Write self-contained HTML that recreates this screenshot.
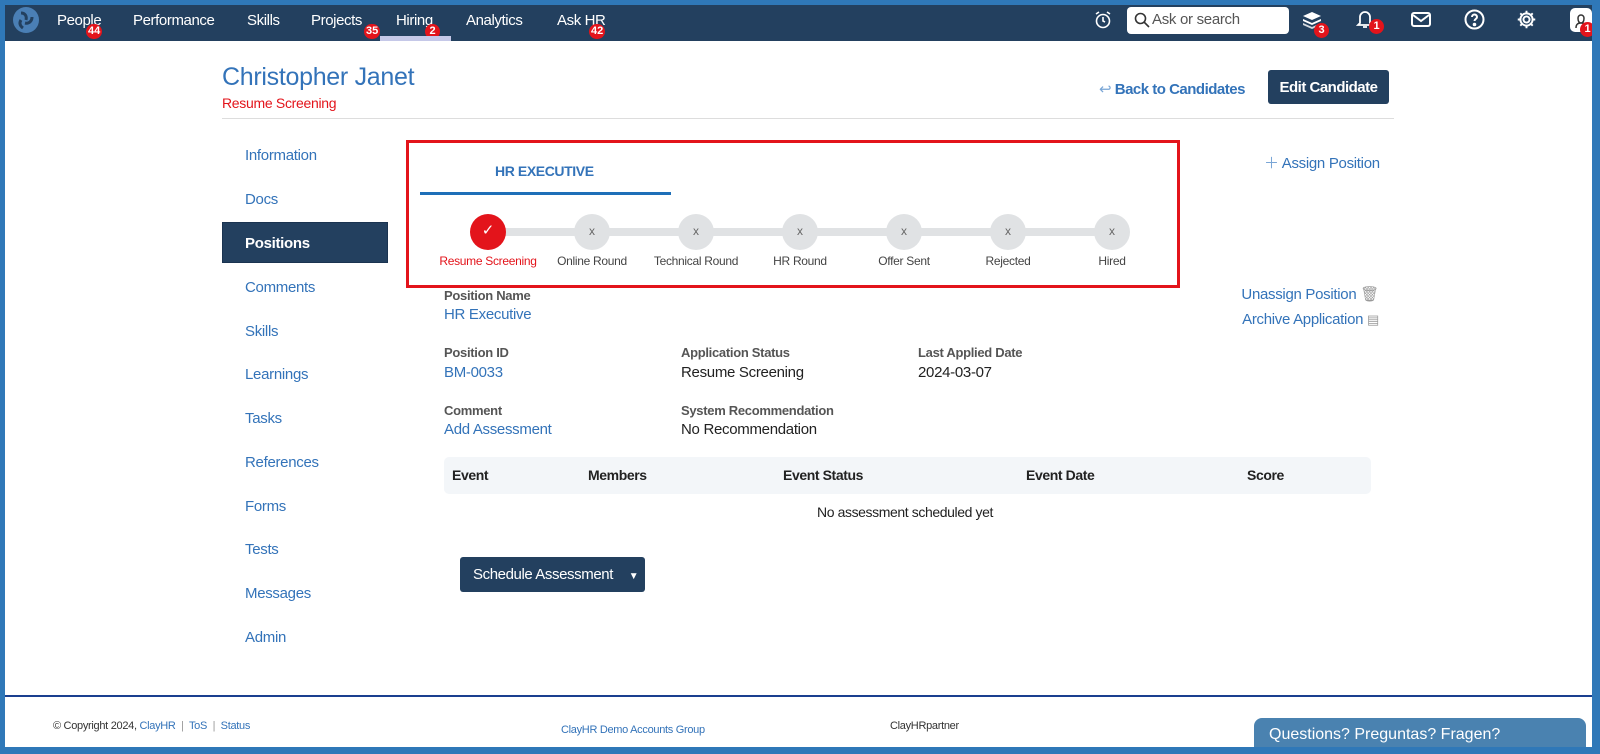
<!DOCTYPE html>
<html><head><meta charset="utf-8"><style>
*{box-sizing:border-box;margin:0;padding:0}
body{width:1600px;height:754px;overflow:hidden;background:#fff;font-family:"Liberation Sans",sans-serif;position:relative;color:#222}
.a{position:absolute;white-space:nowrap}
.frame{position:absolute;inset:0;border:5px solid #2f78b8;border-right-width:8px;border-bottom-width:7px;pointer-events:none;z-index:10}
.bar{position:absolute;left:0;top:0;width:1600px;height:41px;background:#23405f}
.nav{color:#fff;font-size:15px;top:12px;letter-spacing:-0.4px}
.bd{position:absolute;background:#e3141b;color:#fff;font-weight:bold;font-size:11px;border-radius:8px;height:15px;min-width:15px;padding:0 2px;text-align:center;line-height:15px}
.lnk{color:#3373b9}
.side{left:245px;font-size:15px;color:#3373b9;letter-spacing:-0.3px}
.lab{font-size:13px;color:#555;font-weight:bold;letter-spacing:-0.3px}
.val{font-size:15px;letter-spacing:-0.3px}
.circ{position:absolute;width:36px;height:36px;border-radius:50%;background:#e0e2e4;color:#666;font-size:12px;text-align:center;line-height:34px;top:214px}
.sl{position:absolute;top:254px;font-size:12px;color:#444;width:120px;text-align:center;letter-spacing:-0.3px}
.th{top:467px;font-size:14px;font-weight:bold;color:#222;letter-spacing:-0.4px}
</style></head><body>
<div class="bar"></div>
<svg class="a" style="left:12px;top:6px" width="28" height="28" viewBox="0 0 28 28"><circle cx="14" cy="14" r="13" fill="#4a7fb5"/><path d="M9 7c4 0 6 3 5 7M20 11c0 4-3 7-7 6M11 22c-3-2-4-5-2-8" stroke="#23405f" stroke-width="3" fill="none"/></svg>
<div class="a nav" style="left:57px">People</div><div class="bd" style="left:86px;top:24px">44</div>
<div class="a nav" style="left:133px">Performance</div>
<div class="a nav" style="left:247px">Skills</div>
<div class="a nav" style="left:311px">Projects</div><div class="bd" style="left:364px;top:24px">35</div>
<div class="a nav" style="left:396px">Hiring</div><div class="bd" style="left:425px;top:24px">2</div>
<div class="a" style="left:380px;top:36px;width:71px;height:5px;background:#c5c8e8"></div>
<div class="a nav" style="left:466px">Analytics</div>
<div class="a nav" style="left:557px">Ask HR</div><div class="bd" style="left:589px;top:24px">42</div>
<svg class="a" style="left:1093px;top:10px" width="20" height="20" viewBox="0 0 20 20" fill="none" stroke="#fff" stroke-width="1.6"><circle cx="10" cy="11" r="6.5"/><path d="M10 7v4l2 1M3 4l3-2M17 4l-3-2"/></svg>
<div class="a" style="left:1127px;top:7px;width:162px;height:27px;background:#fff;border-radius:4px"></div>
<svg class="a" style="left:1134px;top:12px" width="16" height="16" viewBox="0 0 16 16" fill="none" stroke="#333" stroke-width="1.6"><circle cx="6.5" cy="6.5" r="5"/><path d="M10 10l5 5"/></svg>
<div class="a" style="left:1152px;top:11px;font-size:15px;color:#555;letter-spacing:-0.3px">Ask or search</div>
<svg class="a" style="left:1302px;top:11px" width="20" height="18" viewBox="0 0 20 18" fill="#fff"><path d="M10 1l9 4-9 4-9-4z"/><path d="M1 8l9 4 9-4v2l-9 4-9-4z"/><path d="M1 12l9 4 9-4v2l-9 4-9-4z" opacity=".8"/></svg><div class="bd" style="left:1314px;top:23px">3</div>
<svg class="a" style="left:1356px;top:9px" width="18" height="20" viewBox="0 0 18 20" fill="none" stroke="#fff" stroke-width="1.8"><path d="M4 14V8a5 5 0 0110 0v6l2 2H2zM7 18h4"/></svg><div class="bd" style="left:1369px;top:19px">1</div>
<svg class="a" style="left:1411px;top:12px" width="20" height="15" viewBox="0 0 20 15" fill="none" stroke="#fff" stroke-width="2"><rect x="1" y="1" width="18" height="13" rx="2"/><path d="M2 3l8 6 8-6"/></svg>
<svg class="a" style="left:1464px;top:9px" width="21" height="21" viewBox="0 0 21 21" fill="none" stroke="#fff" stroke-width="2"><circle cx="10.5" cy="10.5" r="9"/><path d="M8 8a2.5 2.5 0 115 0c0 2-2.5 2-2.5 4"/><circle cx="10.5" cy="15.5" r=".8" fill="#fff"/></svg>
<svg class="a" style="left:1516px;top:9px" width="21" height="21" viewBox="0 0 24 24" fill="none" stroke="#fff" stroke-width="2.2"><circle cx="12" cy="12" r="3.5"/><path d="M12 2v3M12 19v3M2 12h3M19 12h3M4.9 4.9l2.1 2.1M17 17l2.1 2.1M4.9 19.1L7 17M17 7l2.1-2.1"/><circle cx="12" cy="12" r="7"/></svg>
<div class="a" style="left:1570px;top:8px;width:22px;height:24px;background:#fff;border-radius:5px"></div>
<svg class="a" style="left:1572px;top:10px" width="18" height="20" viewBox="0 0 18 20" fill="none" stroke="#333" stroke-width="1.5"><path d="M4 18c0-4 2-5 5-5s5 1 5 5M6 8a3 3 0 016 0c0 3-1 5-3 5S6 11 6 8z"/></svg><div class="bd" style="left:1580px;top:22px">1</div>

<div class="a" style="left:222px;top:63px;font-size:25px;color:#3373b9;letter-spacing:-0.3px">Christopher Janet</div>
<div class="a" style="left:222px;top:95px;font-size:14px;color:#e3141b;letter-spacing:-0.3px">Resume Screening</div>
<div class="a" style="left:222px;top:118px;width:1172px;height:1px;background:#ddd"></div>
<div class="a lnk" style="left:1099px;top:80px;font-size:15px;font-weight:bold;letter-spacing:-0.5px"><span style="font-weight:normal;color:#7aa6d6">↩</span> Back to Candidates</div>
<div class="a" style="left:1268px;top:70px;width:121px;height:34px;background:#23405f;border-radius:3px;color:#fff;font-size:15px;font-weight:bold;text-align:center;line-height:36px;letter-spacing:-0.5px">Edit Candidate</div>

<div class="a side" style="top:147px">Information</div>
<div class="a side" style="top:191px">Docs</div>
<div class="a" style="left:222px;top:222px;width:166px;height:41px;background:#23405f;border:1px solid #1a3350"></div>
<div class="a side" style="top:235px;color:#fff;font-weight:bold">Positions</div>
<div class="a side" style="top:279px">Comments</div>
<div class="a side" style="top:323px">Skills</div>
<div class="a side" style="top:366px">Learnings</div>
<div class="a side" style="top:410px">Tasks</div>
<div class="a side" style="top:454px">References</div>
<div class="a side" style="top:498px">Forms</div>
<div class="a side" style="top:541px">Tests</div>
<div class="a side" style="top:585px">Messages</div>
<div class="a side" style="top:629px">Admin</div>

<div class="a" style="left:406px;top:140px;width:774px;height:148px;border:3px solid #e3141b"></div>
<div class="a" style="left:495px;top:163px;font-size:14px;font-weight:bold;color:#3373b9;letter-spacing:-0.4px">HR EXECUTIVE</div>
<div class="a" style="left:420px;top:192px;width:251px;height:3px;background:#1e6fb8"></div>
<div class="a" style="left:490px;top:228px;width:620px;height:8px;background:#e0e2e4"></div>
<div class="circ" style="left:470px;background:#e3141b;color:#fff;font-size:15px">✓</div>
<div class="circ" style="left:574px">x</div>
<div class="circ" style="left:678px">x</div>
<div class="circ" style="left:782px">x</div>
<div class="circ" style="left:886px">x</div>
<div class="circ" style="left:990px">x</div>
<div class="circ" style="left:1094px">x</div>
<div class="sl" style="left:428px;color:#e3141b">Resume Screening</div>
<div class="sl" style="left:532px">Online Round</div>
<div class="sl" style="left:636px">Technical Round</div>
<div class="sl" style="left:740px">HR Round</div>
<div class="sl" style="left:844px">Offer Sent</div>
<div class="sl" style="left:948px">Rejected</div>
<div class="sl" style="left:1052px">Hired</div>

<div class="a lnk" style="left:1264px;top:152px;font-size:15px;letter-spacing:-0.3px"><span style="color:#7aa6d6">＋</span> Assign Position</div>
<div class="a lnk" style="right:221px;top:285px;font-size:15px;letter-spacing:-0.3px">Unassign Position <span style="color:#999">🗑</span></div>
<div class="a lnk" style="right:221px;top:311px;font-size:15px;letter-spacing:-0.3px">Archive Application <span style="color:#999;font-size:13px">▤</span></div>

<div class="a lab" style="left:444px;top:288px">Position Name</div>
<div class="a val lnk" style="left:444px;top:306px">HR Executive</div>
<div class="a lab" style="left:444px;top:345px">Position ID</div>
<div class="a val lnk" style="left:444px;top:364px">BM-0033</div>
<div class="a lab" style="left:681px;top:345px">Application Status</div>
<div class="a val" style="left:681px;top:364px">Resume Screening</div>
<div class="a lab" style="left:918px;top:345px">Last Applied Date</div>
<div class="a val" style="left:918px;top:364px">2024-03-07</div>
<div class="a lab" style="left:444px;top:403px">Comment</div>
<div class="a val lnk" style="left:444px;top:421px">Add Assessment</div>
<div class="a lab" style="left:681px;top:403px">System Recommendation</div>
<div class="a val" style="left:681px;top:421px">No Recommendation</div>

<div class="a" style="left:444px;top:457px;width:927px;height:37px;background:#f3f6f9;border-radius:5px"></div>
<div class="a th" style="left:452px">Event</div>
<div class="a th" style="left:588px">Members</div>
<div class="a th" style="left:783px">Event Status</div>
<div class="a th" style="left:1026px">Event Date</div>
<div class="a th" style="left:1247px">Score</div>
<div class="a" style="left:817px;top:504px;font-size:14px;letter-spacing:-0.4px">No assessment scheduled yet</div>
<div class="a" style="left:460px;top:557px;width:185px;height:35px;background:#23405f;border-radius:3px;color:#fff;font-size:15px;line-height:35px;padding-left:13px;letter-spacing:-0.4px">Schedule Assessment <span style="font-size:10px;margin-left:12px">▼</span></div>

<div class="a" style="left:0;top:695px;width:1600px;height:2px;background:#1a3f8f"></div>
<div class="a" style="left:53px;top:720px;font-size:11px;color:#333;letter-spacing:-0.3px">© Copyright 2024, <span class="lnk">ClayHR</span> <span style="color:#999">&nbsp;|&nbsp;</span> <span class="lnk">ToS</span> <span style="color:#999">&nbsp;|&nbsp;</span> <span class="lnk">Status</span></div>
<div class="a lnk" style="left:561px;top:724px;font-size:11px;letter-spacing:-0.3px">ClayHR Demo Accounts Group</div>
<div class="a" style="left:890px;top:720px;font-size:11px;color:#333;letter-spacing:-0.3px">ClayHRpartner</div>
<div class="a" style="left:1254px;top:718px;width:332px;height:36px;background:#4a82b0;border-radius:8px 8px 0 0;color:#fff;font-size:16px;padding:8px 15px">Questions? Preguntas? Fragen?</div>
<div class="frame"></div>
</body></html>
